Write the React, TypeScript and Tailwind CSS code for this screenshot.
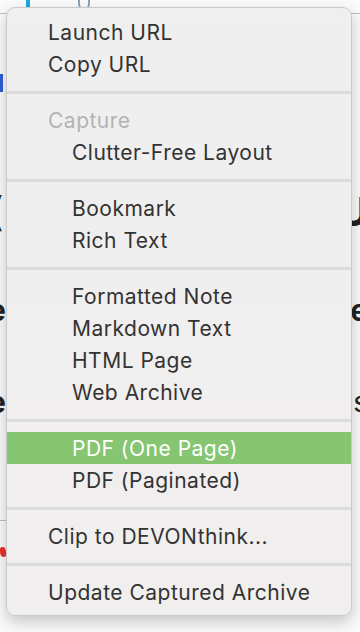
import React from "react";

type Item =
  | { kind: "item"; label: string; indent?: boolean; disabled?: boolean; active?: boolean }
  | { kind: "sep" };

const items: Item[] = [
  { kind: "item", label: "Launch URL" },
  { kind: "item", label: "Copy URL" },
  { kind: "sep" },
  { kind: "item", label: "Capture", disabled: true },
  { kind: "item", label: "Clutter-Free Layout", indent: true },
  { kind: "sep" },
  { kind: "item", label: "Bookmark", indent: true },
  { kind: "item", label: "Rich Text", indent: true },
  { kind: "sep" },
  { kind: "item", label: "Formatted Note", indent: true },
  { kind: "item", label: "Markdown Text", indent: true },
  { kind: "item", label: "HTML Page", indent: true },
  { kind: "item", label: "Web Archive", indent: true },
  { kind: "sep" },
  { kind: "item", label: "PDF (One Page)", indent: true, active: true },
  { kind: "item", label: "PDF (Paginated)", indent: true },
  { kind: "sep" },
  { kind: "item", label: "Clip to DEVONthink..." },
  { kind: "sep" },
  { kind: "item", label: "Update Captured Archive" },
];

function EdgeRow({ h, left, right, leftCls = "", rightCls = "" }: { h: string; left?: string; right?: string; leftCls?: string; rightCls?: string }) {
  return (
    <div className={`flex items-center justify-between overflow-hidden leading-none ${h}`}>
      <span className={`-ml-[12px] ${leftCls}`}>{left}</span>
      <span className={`-mr-[8px] ${rightCls}`}>{right}</span>
    </div>
  );
}

export default function App() {
  return (
    <div
      className="relative w-[360px] h-[632px] overflow-hidden bg-[#fbfbfb] text-[#222]"
      style={{ fontFamily: "Inter, 'Liberation Sans', sans-serif" }}
    >
      {/* page behind the menu */}
      <div className="flex flex-col">
        <div className="flex items-start h-[13px] gap-[48px] pl-[26px]">
          <span className="w-[4px] h-[8px] bg-[#1aa9e0]" />
          <span className="w-[12px] h-[10px] rounded-b-full border-2 border-t-0 border-[#8aa0c0]" />
        </div>
        <div className="h-px bg-[#bdbdbd]" />
        <div className="h-[60px]" />
        <div className="flex h-[18px]">
          <span className="w-[3px] h-[18px] bg-[#2d5fd6]" />
        </div>
        <div className="h-[100px]" />
        <EdgeRow h="h-[40px]" left="(" right="U" leftCls="text-[40px] font-bold" rightCls="text-[40px] font-bold" />
        <div className="h-[62px]" />
        <EdgeRow h="h-[32px]" left="e" right="e" leftCls="text-[30px] font-bold" rightCls="text-[30px] font-bold" />
        <EdgeRow h="h-[36px]" right="i" rightCls="text-[30px] font-bold" />
        <div className="h-[20px]" />
        <EdgeRow h="h-[40px]" left="e" right="s" leftCls="text-[30px] font-bold" rightCls="text-[28px]" />
        <div className="h-[98px]" />
        <div className="h-px w-[10px] bg-[#bdbdbd]" />
        <div className="h-[26px]" />
        <div className="flex h-[10px]">
          <span className="w-[6px] h-[10px] -rotate-12 rounded-sm bg-[#e8332a]" />
        </div>
      </div>

      {/* context menu */}
      <div className="absolute left-[6px] top-[7px] w-[346px] rounded-[9px] border border-[#c9c9c9] bg-gradient-to-b from-[#efefef] to-[#f1eeee] pt-[8px] pb-[7px] shadow-[0_6px_16px_rgba(0,0,0,0.22)]">
        {items.map((it, i) =>
          it.kind === "sep" ? (
            <div key={i} className="flex h-[24px] items-center">
              <div className="h-[3px] w-full bg-[#dcdcdc]" />
            </div>
          ) : (
            <div
              key={i}
              className={`flex h-[32px] items-center text-[21px] tracking-[0.5px] leading-none ${it.indent ? "pl-[65px]" : "pl-[41px]"} ${
                it.active ? "bg-[#86c673] text-white" : it.disabled ? "text-[#b3b3b3]" : "text-[#333333]"
              }`}
            >
              {it.label}
            </div>
          )
        )}
      </div>
    </div>
  );
}
